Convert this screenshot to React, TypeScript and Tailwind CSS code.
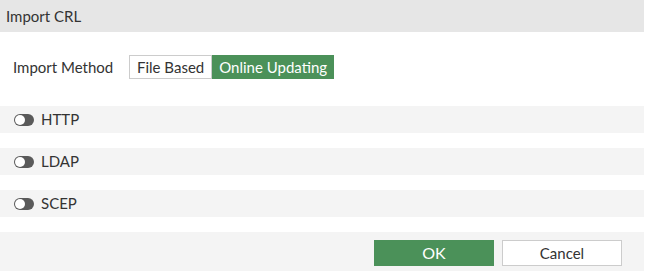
import React, { useState } from "react";

function Toggle() {
  return (
    <span className="relative inline-flex h-[12px] w-[20px] items-center rounded-full bg-[#5a5a5a]">
      <span className="ml-[1px] h-[10px] w-[10px] rounded-full bg-white" />
    </span>
  );
}

export default function App() {
  const [method, setMethod] = useState("online");
  const sections = ["HTTP", "LDAP", "SCEP"];

  return (
    <div className="h-[271px] w-[646px] bg-white font-['Lato',sans-serif] text-[#333]">
      <div className="w-[644px]">
        <div className="flex h-8 items-center bg-[#e6e6e6] pl-[6px] text-[15px]">Import CRL</div>

        <div className="mt-[23px] flex h-6 items-center pl-[13px] text-[15px]">
          <span className="w-[116px]">Import Method</span>
          <div className="flex h-6">
            <button
              onClick={() => setMethod("file")}
              className={
                method === "file"
                  ? "h-6 border border-[#4b9159] bg-[#4b9159] px-[7px] text-white"
                  : "h-6 border border-[#ccc] bg-white px-[7px] text-[#333]"
              }
            >
              File Based
            </button>
            <button
              onClick={() => setMethod("online")}
              className={
                method === "online"
                  ? "h-6 border border-[#4b9159] bg-[#4b9159] px-[6px] text-white"
                  : "h-6 border border-[#ccc] bg-white px-[6px] text-[#333]"
              }
            >
              Online Updating
            </button>
          </div>
        </div>

        <div className="mt-[27px] flex flex-col gap-[15px]">
          {sections.map((s) => (
            <div key={s} className="flex h-[27px] items-center gap-[7px] bg-[#f4f4f4] pl-[14px] text-[15px]">
              <Toggle />
              <span>{s}</span>
            </div>
          ))}
        </div>

        <div className="mt-[15px] flex h-[39px] items-start justify-end gap-2 bg-[#f4f4f4] pr-[22px] pt-2">
          <button className="h-[26px] w-[120px] bg-[#4b9159] text-[16px] text-white">OK</button>
          <button className="h-[26px] w-[120px] border border-[#ccc] bg-white text-[15px] text-[#333]">Cancel</button>
        </div>
      </div>
    </div>
  );
}
